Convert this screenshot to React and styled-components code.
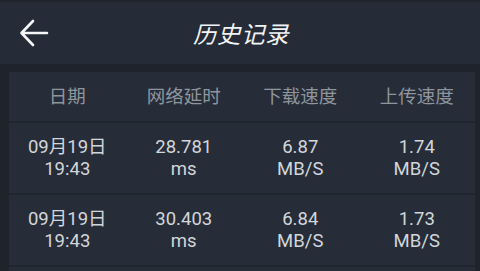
import React from "react";
import styled, { createGlobalStyle } from "styled-components";

const GlobalStyle = createGlobalStyle`
  html, body {
    margin: 0;
    padding: 0;
    background: #1f242c;
  }
  body {
    font-family: Roboto, "Noto Sans CJK SC", sans-serif;
  }
`;

const Screen = styled.div`
  width: 480px;
  height: 271px;
  overflow: hidden;
  background-color: #1f242c;
  display: flex;
  flex-direction: column;
`;

const TopBar = styled.div`
  height: 64px;
  flex-shrink: 0;
  background-color: #252b37;
  border-top: 2px solid #20252d;
  box-sizing: border-box;
  display: grid;
  grid-template-columns: 64px 1fr 64px;
  align-items: center;
`;

const BackButton = styled.div`
  display: flex;
  align-items: center;
  justify-content: center;
  padding-left: 4px;
  padding-bottom: 1px;
`;

const Title = styled.div`
  text-align: center;
  color: #f2f3f5;
  font-size: 23.5px;
  font-style: italic;
  font-family: "Noto Sans CJK SC", sans-serif;
  letter-spacing: 0.5px;
  padding-left: 2px;
`;

const Panel = styled.div`
  margin: 8px 5px 0 9px;
  flex: 1;
  background-color: #262d39;
`;

const Row = styled.div`
  display: grid;
  grid-template-columns: repeat(4, 1fr);
  align-items: center;
  height: ${(p) => (p.$head ? "49px" : "70px")};
  border-bottom: 2px solid #20262e;
`;

const Cell = styled.div`
  text-align: center;
  font-size: 18.5px;
  line-height: 22px;
  color: ${(p) => (p.$head ? "#8f959d" : "#d3d6da")};
  font-family: Roboto, "Noto Sans CJK SC", sans-serif;
`;

const heads = ["日期", "网络延时", "下载速度", "上传速度"];

const records = [
  { date: "09月19日", time: "19:43", ping: "28.781", down: "6.87", up: "1.74" },
  { date: "09月19日", time: "19:43", ping: "30.403", down: "6.84", up: "1.73" },
];

const BackArrow = () => (
  <svg width="30" height="30" viewBox="0 0 30 30" fill="none">
    <path
      d="M28 15H3M14 3L2.5 15L14 27"
      stroke="#f4f5f7"
      strokeWidth="2.6"
      strokeLinecap="round"
      strokeLinejoin="round"
    />
  </svg>
);

export default function App() {
  return (
    <Screen>
      <GlobalStyle />
      <TopBar>
        <BackButton>
          <BackArrow />
        </BackButton>
        <Title>历史记录</Title>
      </TopBar>
      <Panel>
        <Row $head>
          {heads.map((h) => (
            <Cell $head key={h}>
              {h}
            </Cell>
          ))}
        </Row>
        {records.map((r, i) => (
          <Row key={i}>
            <Cell>
              {r.date}
              <br />
              {r.time}
            </Cell>
            <Cell>
              {r.ping}
              <br />
              ms
            </Cell>
            <Cell>
              {r.down}
              <br />
              MB/S
            </Cell>
            <Cell>
              {r.up}
              <br />
              MB/S
            </Cell>
          </Row>
        ))}
      </Panel>
    </Screen>
  );
}
